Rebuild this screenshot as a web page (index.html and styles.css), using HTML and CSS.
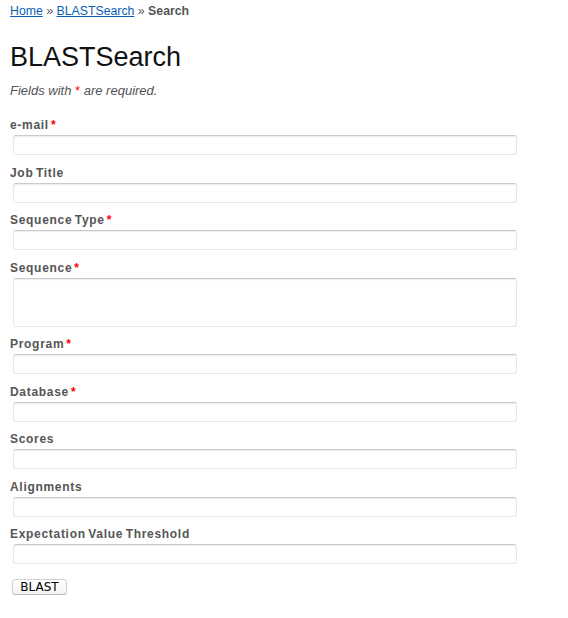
FILE: index.html
```html
<!DOCTYPE html>
<html>
<head>
<meta charset="utf-8">
<title>BLASTSearch</title>
<link rel="stylesheet" href="styles.css">
</head>
<body>
<div class="page">
  <div class="breadcrumbs"><a href="#">Home</a> &raquo; <a href="#">BLASTSearch</a> &raquo; <span class="current">Search</span></div>
  <h1 class="title">BLASTSearch</h1>
  <p class="note">Fields with <span class="required">*</span> are required.</p>
  <form class="form">
    <div class="row"><label class="label">e-mail<span class="required">*</span></label><input class="field" type="text"></div>
    <div class="row"><label class="label">Job Title</label><input class="field" type="text"></div>
    <div class="row"><label class="label">Sequence Type<span class="required">*</span></label><input class="field" type="text"></div>
    <div class="row"><label class="label">Sequence<span class="required">*</span></label><textarea class="field area"></textarea></div>
    <div class="row"><label class="label">Program<span class="required">*</span></label><input class="field" type="text"></div>
    <div class="row"><label class="label">Database<span class="required">*</span></label><input class="field" type="text"></div>
    <div class="row"><label class="label">Scores</label><input class="field" type="text"></div>
    <div class="row"><label class="label">Alignments</label><input class="field" type="text"></div>
    <div class="row"><label class="label">Expectation Value Threshold</label><input class="field" type="text"></div>
    <div class="buttons"><button class="btn" type="button">BLAST</button></div>
  </form>
</div>
</body>
</html>
```
FILE: styles.css
```css
html, body {
  margin: 0;
  padding: 0;
  background: #fff;
}
.page {
  padding: 4px 10px 0 10px;
  font-family: "Liberation Sans", Arial, sans-serif;
  color: #555;
}
.breadcrumbs {
  font-size: 12.3px;
  line-height: 15px;
  color: #555;
}
.breadcrumbs a {
  color: #0a5fb4;
  text-decoration: underline;
}
.breadcrumbs .current {
  font-weight: bold;
}
.title {
  margin: 22px 0 0 0;
  font-size: 27px;
  line-height: 32px;
  font-weight: normal;
  color: #111;
}
.note {
  margin: 10px 0 0 0;
  font-size: 13px;
  line-height: 16px;
  font-style: italic;
  color: #555;
}
.required {
  color: #f00;
  font-style: normal;
}
.form {
  margin-top: 19px;
}
.row {
  margin-bottom: 10.5px;
}
.label {
  display: block;
  font-size: 12px;
  line-height: 15px;
  font-weight: bold;
  letter-spacing: 0.7px;
  word-spacing: -1.5px;
  color: #555;
}
.label .required {
  letter-spacing: 0;
  margin-left: 2px;
}
.field {
  display: block;
  box-sizing: border-box;
  margin: 2px 0 0 3px;
  width: 504px;
  height: 20px;
  padding: 2px 4px;
  border: 1px solid #e6e6e6;
  border-top-color: #cacaca;
  border-radius: 3px;
  box-shadow: inset 0 1px 1px rgba(0,0,0,0.07);
  background: #fff;
  font-size: 12px;
}
.area {
  height: 49px;
  resize: none;
}
.buttons {
  padding-top: 2px;
}
.btn {
  margin-left: 2px;
  box-sizing: border-box;
  width: 55px;
  height: 16px;
  padding: 0;
  font-family: "DejaVu Sans", sans-serif;
  font-size: 12px;
  line-height: 14px;
  color: #000;
  background: linear-gradient(#ffffff, #f4f4f4);
  border: 1px solid #d0d0d0;
  border-bottom-color: #b8b8b8;
  border-radius: 4px;
  box-shadow: 0 1px 1px rgba(0,0,0,0.15);
}
```
